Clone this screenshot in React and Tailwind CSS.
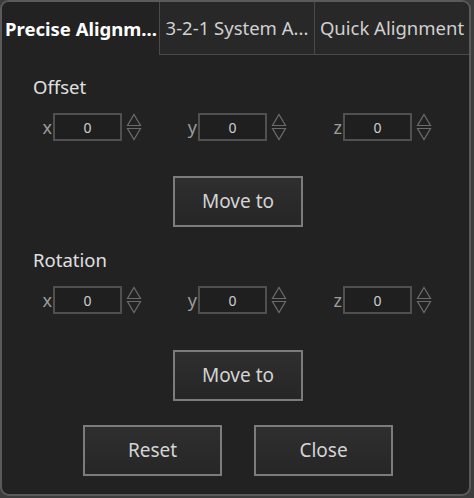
import { useState } from "react";

const font = { fontFamily: '"Noto Sans", "Open Sans", sans-serif' };

function Spinner() {
  return (
    <svg width="16" height="28" viewBox="0 0 16 28" className="shrink-0">
      <polygon points="8,1.5 14.5,12.5 1.5,12.5" fill="none" stroke="#6b6b6b" strokeWidth="1.2" />
      <polygon points="1.5,15.5 14.5,15.5 8,26.5" fill="none" stroke="#6b6b6b" strokeWidth="1.2" />
    </svg>
  );
}

function NumField({ label, value }) {
  return (
    <div className="flex items-center">
      <span className="w-[14px] text-[18px] leading-none text-[#9c9c9c] text-right pr-[1px]">{label}</span>
      <div className="w-[69px] h-[28px] border-2 border-[#505050] bg-[#1f1f1f] flex items-center justify-center text-[14px] text-[#cfcfcf]">
        {value}
      </div>
      <div className="ml-[4px]">
        <Spinner />
      </div>
    </div>
  );
}

function FieldRow({ values }) {
  return (
    <div className="flex pl-[37px] gap-[42px]">
      <NumField label="x" value={values[0]} />
      <NumField label="y" value={values[1]} />
      <NumField label="z" value={values[2]} />
    </div>
  );
}

function Btn({ children, className = "" }) {
  return (
    <button
      type="button"
      className={"w-[130px] h-[51px] border-2 border-[#7c7c7c] bg-gradient-to-b from-[#2f2f2f] to-[#262626] text-[19px] text-[#d4d4d4] " + className}
    >
      {children}
    </button>
  );
}

export default function App() {
  const [tab, setTab] = useState(0);
  const tabs = ["Precise Alignm...", "3-2-1 System A...", "Quick Alignment"];
  const widths = ["w-[158px]", "w-[156px]", "w-[156px]"];

  return (
    <div className="w-[474px] h-[498px] bg-[#3d3d3d]" style={font}>
      <div className="w-[471px] h-[496px] rounded-[9px] border-2 border-[#5a5a5a] bg-[#222222] overflow-hidden flex flex-col">
        <div className="flex h-[53px] shrink-0">
          {tabs.map((t, i) => (
            <button
              key={t}
              type="button"
              onClick={() => setTab(i)}
              className={
                widths[i] +
                " h-full flex items-center text-[18.5px] whitespace-nowrap " +
                (i === tab
                  ? "bg-[#222222] text-white font-bold pl-[3px]"
                  : "bg-[#282828] text-[#d0d0d0] border-l border-b border-[#4a4a4a] justify-center")
              }
            >
              {t}
            </button>
          ))}
        </div>

        <div className="pl-[31px] mt-[20px] text-[18.5px] leading-[24px] text-[#e0e0e0]">Offset</div>
        <div className="mt-[14px]">
          <FieldRow values={["0", "0", "0"]} />
        </div>
        <div className="mt-[35px] pl-[171px]">
          <Btn>Move to</Btn>
        </div>

        <div className="pl-[31px] mt-[21px] text-[18.5px] leading-[24px] text-[#e0e0e0]">Rotation</div>
        <div className="mt-[14px]">
          <FieldRow values={["0", "0", "0"]} />
        </div>
        <div className="mt-[36px] pl-[171px]">
          <Btn>Move to</Btn>
        </div>

        <div className="mt-[24px] pl-[81px] flex gap-[32px]">
          <Btn className="w-[139px]">Reset</Btn>
          <Btn className="w-[139px]">Close</Btn>
        </div>
      </div>
    </div>
  );
}
